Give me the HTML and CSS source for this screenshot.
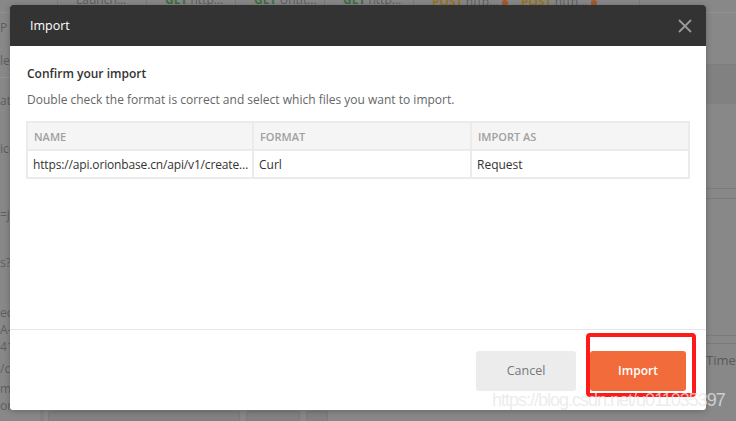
FILE: index.html
```html
<!DOCTYPE html>
<html lang="en">
<head>
    <meta charset="UTF-8">
    <meta name="viewport" content="width=device-width, initial-scale=1.0">
    <title>Import</title>
    <link rel="stylesheet" href="styles.css">
</head>
<body>
    <div class="app">
        <div class="tabs">
            <div class="tab-lead"></div>
            <div class="tab">Launch...</div>
            <div class="tab"><span class="get">GET</span> http...</div>
            <div class="tab"><span class="get">GET</span> Untit...</div>
            <div class="tab"><span class="get">GET</span> http...</div>
            <div class="tab"><span class="post">POST</span> http...<i class="dot"></i></div>
            <div class="tab"><span class="post">POST</span> http...<i class="dot"></i></div>
            <div class="tab tab-small"></div>
        </div>
        <div class="workspace">
            <aside class="sidebar">
                <div class="side-line s1">P|</div>
                <div class="side-line s2">lea</div>
                <div class="side-line s3">ate</div>
                <div class="side-line s4">ice</div>
                <div class="side-line s5">=js</div>
                <div class="side-line s6">s?</div>
                <div class="side-line s7">ec</div>
                <div class="side-line s8">A-</div>
                <div class="side-line s9">41</div>
                <div class="side-line s10">/co</div>
                <div class="side-line s11">mi</div>
                <div class="side-line s12">orio...</div>
            </aside>
            <main class="main">
                <div class="band"></div>
                <div class="rule r1"></div>
                <div class="rule r2"></div>
                <div class="rule r3"></div>
                <div class="rule r4"></div>
                <div class="time">Time:</div>
                <div class="bottom-pills">
                    <span class="pill p1"></span>
                    <span class="pill p2"></span>
                    <span class="pill p3"></span>
                </div>
            </main>
        </div>
    </div>

    <div class="modal">
        <div class="modal-header">
            <span class="modal-title">Import</span>
            <svg class="close" width="14" height="14" viewBox="0 0 14 14">
                <path d="M1 1 L13 13 M13 1 L1 13" stroke="#9a9a9a" stroke-width="1.8" fill="none"/>
            </svg>
        </div>
        <div class="modal-body">
            <h3 class="confirm-title">Confirm your import</h3>
            <p class="confirm-text">Double check the format is correct and select which files you want to import.</p>
            <table class="import-table">
                <colgroup>
                    <col class="col-name">
                    <col class="col-format">
                    <col class="col-as">
                </colgroup>
                <thead>
                    <tr>
                        <th>NAME</th>
                        <th>FORMAT</th>
                        <th>IMPORT AS</th>
                    </tr>
                </thead>
                <tbody>
                    <tr>
                        <td class="cell-name">https://api.orionbase.cn/api/v1/createOrder</td>
                        <td>Curl</td>
                        <td>Request</td>
                    </tr>
                </tbody>
            </table>
        </div>
        <div class="modal-footer">
            <button class="btn btn-cancel">Cancel</button>
            <button class="btn btn-import">Import</button>
            <div class="highlight"></div>
        </div>
    </div>

    <div class="watermark">https://blog.csdn.net/u011035397</div>
</body>
</html>
```

FILE: styles.css
```css
:root {
    --overlay-bg: #888888;
    --overlay-text: #5e5e5e;
    --overlay-line: #7b7b7b;
    --header-bg: #333333;
    --text-color: #333333;
    --muted-text: #666666;
    --border-color: #ebebeb;
    --orange: #f26b3a;
}

html, body {
    margin: 0;
    padding: 0;
}

body {
    font-family: 'Open Sans', 'Noto Sans', sans-serif;
    width: 736px;
    height: 421px;
    overflow: hidden;
    background-color: var(--overlay-bg);
    position: relative;
}

/* background app, dimmed by the overlay */
.app {
    height: 421px;
    display: flex;
    flex-direction: column;
    color: var(--overlay-text);
    font-size: 12px;
}

.tabs {
    display: flex;
    height: 12px;
    border-bottom: 1px solid #939393;
    line-height: 0;
    overflow: hidden;
}

.tab-lead {
    width: 57px;
    border-right: 1px solid var(--overlay-line);
}

.tab {
    width: 89px;
    border-right: 1px solid var(--overlay-line);
    padding-left: 18px;
    box-sizing: border-box;
    white-space: nowrap;
}

.tab:first-of-type {
    margin-left: 10px;
}

.tab-small {
    width: 48px;
}

.tab .get {
    color: #3f6f3f;
    font-weight: bold;
}

.tab .post {
    color: #9a7424;
    font-weight: bold;
}

.dot {
    display: inline-block;
    width: 6px;
    height: 6px;
    border-radius: 50%;
    background-color: #a65a2e;
    margin-left: 3px;
}

.workspace {
    flex: 1;
    display: flex;
}

.sidebar {
    width: 40px;
    border-right: 4px solid #828282;
    display: flex;
    flex-direction: column;
}

.side-line {
    white-space: nowrap;
    line-height: 17px;
}

.s1 { margin-top: 6px; }
.s2 { margin-top: 16px; padding-bottom: 8px; border-bottom: 1px solid #939393; }
.s3 { margin-top: 14px; }
.s4 { margin-top: 31px; }
.s5 { margin-top: 49px; }
.s6 { margin-top: 31px; }
.s7 { margin-top: 33px; }
.s10 { margin-top: 5px; }
.s11 { margin-top: 3px; }
.s12 { margin-top: 0; }

.main {
    flex: 1;
    display: flex;
    flex-direction: column;
}

.band {
    height: 39px;
    margin-top: 51px;
    background-color: #818181;
    border-top: 1px solid #7e7e7e;
}

.rule {
    height: 1px;
    background-color: var(--overlay-line);
}

.r1 { margin-top: 84px; }
.r2 { margin-top: 9px; }
.r3 { margin-top: 136px; }
.r4 { margin-top: 7px; }

.time {
    align-self: flex-end;
    margin-top: 7px;
    width: 30px;
    white-space: nowrap;
    overflow: hidden;
    font-size: 13px;
    color: #5a5a5a;
}

.bottom-pills {
    margin-top: auto;
    display: flex;
    gap: 6px;
    padding-left: 4px;
    height: 10px;
}

.pill {
    background-color: #818181;
    border-radius: 3px 3px 0 0;
    border: 1px solid #7a7a7a;
    border-bottom: none;
}

.p1 { width: 190px; }
.p2 { width: 52px; }
.p3 { width: 20px; }

/* modal */
.modal {
    position: absolute;
    left: 10px;
    top: 5px;
    width: 696px;
    height: 405px;
    background-color: #ffffff;
    border-radius: 3px;
    box-shadow: 0 1px 6px rgba(0, 0, 0, 0.25);
    display: flex;
    flex-direction: column;
    overflow: hidden;
}

.modal-header {
    height: 41px;
    background-color: var(--header-bg);
    display: flex;
    align-items: center;
    justify-content: space-between;
    padding: 0 14px 0 20px;
    flex-shrink: 0;
}

.modal-title {
    color: #ffffff;
    font-size: 12.5px;
}

.close {
    display: block;
}

.modal-body {
    flex: 1;
    padding: 18px 16px 0 16px;
}

.confirm-title {
    margin: 0 0 0 1px;
    font-size: 12px;
    font-weight: 600;
    color: var(--text-color);
    line-height: 20px;
}

.confirm-text {
    margin: 6px 0 0 1px;
    font-size: 12px;
    color: var(--muted-text);
    line-height: 20px;
}

.import-table {
    margin-top: 11px;
    width: 664px;
    border-collapse: collapse;
    table-layout: fixed;
    border: 2px solid var(--border-color);
    font-size: 12px;
}

.col-name {
    width: 226px;
}

.col-format {
    width: 218px;
}

.import-table th,
.import-table td {
    border: 2px solid var(--border-color);
    height: 26px;
    padding: 0 0 0 5px;
    text-align: left;
    white-space: nowrap;
    overflow: hidden;
    text-overflow: ellipsis;
}

.import-table th {
    background-color: #f5f5f5;
    color: #a0a0a0;
    font-weight: 600;
    font-size: 11px;
    padding-left: 6px;
}

.import-table td {
    color: var(--text-color);
}

.cell-name {
    padding-left: 6px;
    letter-spacing: -0.15px;
}

.modal-footer {
    height: 80px;
    border-top: 1px solid #e6e6e6;
    display: flex;
    align-items: center;
    justify-content: flex-end;
    gap: 14px;
    padding-right: 20px;
    position: relative;
    flex-shrink: 0;
}

.btn {
    height: 40px;
    border: none;
    border-radius: 3px;
    font-family: 'Open Sans', 'Noto Sans', sans-serif;
    font-size: 12.5px;
    cursor: pointer;
    margin-top: 1px;
}

.btn-cancel {
    width: 100px;
    background-color: #ececec;
    color: #777777;
}

.btn-import {
    width: 96px;
    background-color: var(--orange);
    color: #ffffff;
    font-weight: 600;
    font-size: 12px;
}

/* red annotation frame */
.highlight {
    position: absolute;
    left: 576px;
    top: 3px;
    width: 102px;
    height: 56px;
    border: 4px solid #ff1a1a;
    border-radius: 4px;
}

.watermark {
    position: absolute;
    left: 492px;
    top: 390px;
    font-family: 'Liberation Sans', Arial, sans-serif;
    font-size: 18px;
    letter-spacing: -1px;
    color: rgba(230, 230, 230, 0.75);
    white-space: nowrap;
}
```
